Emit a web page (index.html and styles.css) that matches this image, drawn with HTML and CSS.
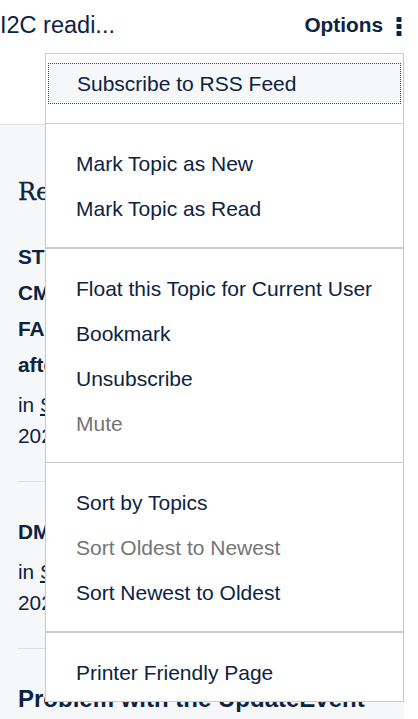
FILE: index.html
```html
<!DOCTYPE html>
<html lang="en">
<head>
<meta charset="utf-8">
<title>Topic options</title>
<link rel="stylesheet" href="styles.css">
</head>
<body>
<div class="page">
  <header class="topbar">
    <span class="crumb">I2C readi...</span>
    <button class="options-btn" type="button">
      <span class="options-label">Options</span>
      <svg class="kebab" width="6" height="19" viewBox="0 0 6 19" aria-hidden="true">
        <rect x="0.5" y="0" width="5" height="5" rx="0.8"/>
        <rect x="0.5" y="7" width="5" height="5" rx="0.8"/>
        <rect x="0.5" y="14" width="5" height="5" rx="0.8"/>
      </svg>
    </button>
  </header>

  <section class="panel">
    <h2 class="panel-title">Related Content</h2>
    <article class="rel-item">
      <h3 class="rel-title">STM32G4 I2C error<br>CMSIS driver HAL<br>FAILS to read data<br>after wake up</h3>
      <p class="rel-meta">in <a href="#">STM32 MCUs Products</a><br>2024-01-15 09:12 AM</p>
    </article>
    <article class="rel-item">
      <h3 class="rel-title">DMA stops after reset</h3>
      <p class="rel-meta">in <a href="#">STM32 MCUs Products</a><br>2023-11-02 03:40 PM</p>
    </article>
    <article class="rel-item last">
      <h3 class="rel-title big">Problem with the UpdateEvent</h3>
    </article>
  </section>

  <div class="dropdown" role="menu">
    <div class="group first">
      <div class="item focused">Subscribe to RSS Feed</div>
    </div>
    <div class="group">
      <div class="item">Mark Topic as New</div>
      <div class="item">Mark Topic as Read</div>
    </div>
    <div class="group thick">
      <div class="item">Float this Topic for Current User</div>
      <div class="item">Bookmark</div>
      <div class="item">Unsubscribe</div>
      <div class="item disabled">Mute</div>
    </div>
    <div class="group">
      <div class="item">Sort by Topics</div>
      <div class="item disabled">Sort Oldest to Newest</div>
      <div class="item">Sort Newest to Oldest</div>
    </div>
    <div class="group thick last">
      <div class="item">Printer Friendly Page</div>
    </div>
  </div>
</div>
</body>
</html>
```

FILE: styles.css
```css
* { box-sizing: border-box; }

html, body {
  margin: 0;
  padding: 0;
  background: #ffffff;
}

body {
  font-family: "Liberation Sans", Arial, sans-serif;
  font-size: 20.8px;
  color: #0c2342;
  overflow: hidden;
}

.page {
  position: relative;
  width: 418px;
  height: 719px;
  overflow: hidden;
}

.topbar {
  height: 124px;
  display: flex;
  align-items: flex-start;
  justify-content: space-between;
  padding: 13px 16px 0 0;
}

.crumb {
  font-size: 23.5px;
  line-height: 24px;
  white-space: nowrap;
}

.options-btn {
  display: flex;
  align-items: center;
  gap: 13px;
  border: 0;
  background: none;
  padding: 0;
  margin: 0;
  font: inherit;
  color: inherit;
  height: 24px;
}

.options-label {
  font-weight: bold;
  line-height: 24px;
}

.kebab {
  display: block;
  fill: #0c2342;
  margin-top: 3px;
}

.panel {
  width: 404px;
  min-height: 595px;
  background: #f6f7f9;
  border-top: 1px solid #dedfe2;
  padding: 0 18px;
}

.panel-title {
  margin: 0;
  padding-top: 52px;
  font-family: "DejaVu Serif", "Liberation Serif", serif;
  font-weight: 500;
  font-size: 24px;
  line-height: 30px;
  white-space: nowrap;
  -webkit-text-stroke: 0.3px #0c2342;
}

.rel-item {
  padding: 32px 0 30px;
  border-bottom: 1px solid #dcdde0;
}

.rel-item.last {
  border-bottom: 0;
}

.rel-title {
  margin: 0;
  font-size: 20.8px;
  font-weight: bold;
  line-height: 36px;
  white-space: nowrap;
}

.rel-title.big {
  font-size: 24px;
}

.rel-meta {
  margin: 6px 0 0;
  line-height: 31px;
  white-space: nowrap;
}

.rel-meta a {
  color: inherit;
  text-decoration: underline;
}

.dropdown {
  position: absolute;
  left: 45px;
  top: 53px;
  width: 359px;
  background: #ffffff;
  border: 1px solid #cbcbcb;
  font-size: 21px;
}

.group {
  padding: 17px 0 16px;
  border-top: 1px solid #cbcbcb;
}

.group.thick {
  border-top-width: 2px;
}

.group.first {
  border-top: 0;
  padding: 9px 0 19px;
}

.group.last {
  padding-bottom: 6px;
}

.item {
  height: 45px;
  line-height: 45px;
  padding-left: 30px;
  white-space: nowrap;
}

.item.focused {
  height: 41px;
  line-height: 39px;
  margin: 0 2px;
  padding-left: 28px;
  background: #f6f7f9;
  border: 1px dotted #4a4a4a;
}

.item.disabled {
  color: #757575;
}
```
